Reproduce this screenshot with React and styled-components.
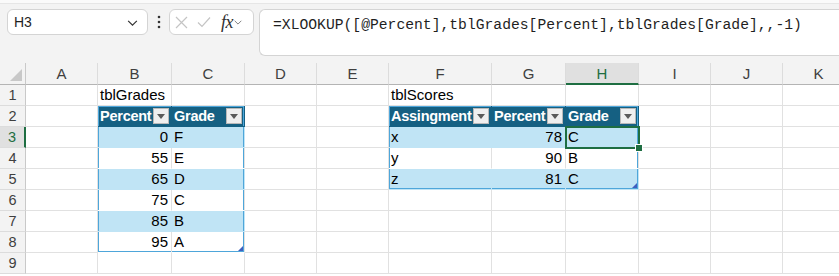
import React from 'react'
import styled, { createGlobalStyle, css } from 'styled-components'

const GlobalStyle = createGlobalStyle`
    html, body {
        margin: 0;
        padding: 0;
        background: #ffffff;
        overflow: hidden;
    }
`

const colours = {
    chrome: '#f3f3f3',
    grid: '#e1e1e1',
    headText: '#3f3f3f',
    tableHead: '#156082',
    band: '#c0e4f5',
    tableEdge: '#4ea6da',
    active: '#1e6e42',
}

const Window = styled.div`
    width: 839px;
    height: 276px;
    overflow: hidden;
    background: ${colours.chrome};
    font-family: "Liberation Sans", Arial, sans-serif;
`

const FormulaBar = styled.div`
    height: 63px;
    box-sizing: border-box;
    display: flex;
    align-items: flex-start;
    padding: 6px 0 0 7px;
    border-top: 3px solid #fafafa;
    box-shadow: inset 0 1px 0 #e6e6e6;
`

const Box = styled.div`
    box-sizing: border-box;
    background: #ffffff;
    border: 1px solid #d4d4d4;
    border-radius: 6px;
    display: flex;
    align-items: center;
`

const NameBox = styled(Box)`
    width: 141px;
    height: 26px;
    padding: 0 8px 0 6px;
    justify-content: space-between;
    font-size: 14px;
    color: #1f1f1f;
`

const Dots = styled.div`
    width: 21px;
    height: 26px;
    display: flex;
    align-items: center;
    justify-content: center;
`

const FnBox = styled(Box)`
    width: 85px;
    height: 26px;
    padding: 0 4px 0 5px;
    gap: 9px;
`

const FxGroup = styled.span`
    display: flex;
    align-items: center;
`

const Fx = styled.span`
    font-family: "Liberation Serif", "Times New Roman", serif;
    font-style: italic;
    font-size: 18px;
    color: #303030;
    margin-left: 1px;
    letter-spacing: -0.5px;
`

const FormulaInput = styled(Box)`
    flex: 1;
    height: 47px;
    margin-left: 5px;
    border-right: none;
    border-radius: 6px 0 0 6px;
    align-items: flex-start;
    padding: 7px 0 0 13px;
    font-family: "Liberation Mono", "Courier New", monospace;
    font-size: 14.7px;
    color: #1f1f1f;
    white-space: nowrap;
`

const Sheet = styled.div`
    display: grid;
    grid-template-columns: 26px 72px 74px 73px 72px 72px 103px 74px 73px 72px 72px 72px;
    grid-template-rows: 22px repeat(9, 21px);
    background: #ffffff;
    height: 213px;
`

const Corner = styled.div`
    background: ${colours.chrome};
    border-right: 1px solid #c9c9c9;
    border-bottom: 1px solid #b4b4b4;
    display: flex;
    align-items: flex-end;
    justify-content: flex-end;
    padding: 0 3px 3px 0;
`

const ColHead = styled.div`
    box-sizing: border-box;
    background: ${p => (p.$selected ? '#e0e0e0' : colours.chrome)};
    color: ${p => (p.$selected ? colours.active : colours.headText)};
    border-right: 1px solid #dcdcdc;
    border-bottom: ${p => (p.$selected ? `2px solid ${colours.active}` : '1px solid #b4b4b4')};
    font-size: 15px;
    display: flex;
    align-items: center;
    justify-content: center;
    padding-top: ${p => (p.$selected ? '1px' : '0')};
`

const RowHead = styled.div`
    box-sizing: border-box;
    background: ${p => (p.$selected ? '#e0e0e0' : colours.chrome)};
    color: ${p => (p.$selected ? colours.active : colours.headText)};
    border-right: ${p => (p.$selected ? `2px solid ${colours.active}` : '1px solid #c9c9c9')};
    border-bottom: 1px solid #dcdcdc;
    font-size: 14.5px;
    display: flex;
    align-items: center;
    justify-content: center;
`

const fills = {
    head: colours.tableHead,
    band: colours.band,
    white: '#ffffff',
}

const edgeShadow = edges => {
    const list = []
    if (edges.includes('t')) list.push(`inset 0 1px 0 ${colours.tableEdge}`)
    if (edges.includes('l')) list.push(`inset 1px 0 0 ${colours.tableEdge}`)
    if (edges.includes('r')) list.push(`inset -1px 0 0 ${colours.tableEdge}`)
    if (edges.includes('b')) list.push(`inset 0 -1px 0 ${colours.tableEdge}`)
    return list.length ? list.join(', ') : 'none'
}

const Cell = styled.div`
    position: relative;
    box-sizing: border-box;
    background: ${p => (p.$fill ? fills[p.$fill] : '#ffffff')};
    border-right: 1px solid ${p => (p.$fill === 'head' || p.$fill === 'band' ? fills[p.$fill] : colours.grid)};
    border-bottom: 1px solid ${p => (p.$fill === 'band' ? colours.band : p.$fill === 'white' ? '#ffffff' : p.$fill === 'head' ? colours.tableHead : colours.grid)};
    box-shadow: ${p => edgeShadow(p.$edges || '')};
    font-size: 15px;
    line-height: 20px;
    color: ${p => (p.$fill === 'head' ? '#ffffff' : '#000000')};
    font-weight: ${p => (p.$fill === 'head' ? 700 : 400)};
    display: flex;
    align-items: center;
    justify-content: ${p => (p.$align === 'right' ? 'flex-end' : 'flex-start')};
    padding: 0 ${p => (p.$align === 'right' ? '3px' : '0')} 0 2px;
    white-space: nowrap;

    ${p => p.$active && css`
        &::before {
            content: '';
            position: absolute;
            left: -1px;
            top: -1px;
            right: -2px;
            bottom: -2px;
            border: 2px solid ${colours.active};
            z-index: 2;
        }
        &::after {
            content: '';
            position: absolute;
            right: -5px;
            bottom: -5px;
            width: 6px;
            height: 6px;
            background: ${colours.active};
            border: 1px solid #ffffff;
            z-index: 3;
        }
    `}

    ${p => p.$resize && !p.$active && css`
        &::after {
            content: '';
            position: absolute;
            right: 1px;
            bottom: 1px;
            border-left: 5px solid transparent;
            border-bottom: 5px solid #3f5fbf;
        }
    `}
`

const HeadLabel = styled.span`
    flex: 1;
    font-size: 14.5px;
    letter-spacing: -0.25px;
`

const FilterButton = styled.span`
    flex: none;
    box-sizing: border-box;
    width: 16px;
    height: 16px;
    margin-right: 2px;
    background: #efefef;
    border: 1px solid #b9b9b9;
    display: flex;
    align-items: center;
    justify-content: center;
    &::before {
        content: '';
        border-left: 4px solid transparent;
        border-right: 4px solid transparent;
        border-top: 5px solid #5a5a5a;
        margin-top: 1px;
    }
`

const Chevron = ({ size = 12, colour = '#444' }) => (
    <svg width={size} height={size} viewBox="0 0 12 12">
        <path d="M2 4.5 L6 8.5 L10 4.5" fill="none" stroke={colour} strokeWidth="1.1" />
    </svg>
)

const columns = ['A', 'B', 'C', 'D', 'E', 'F', 'G', 'H', 'I', 'J', 'K']

const tables = [
    {
        col: 1,
        row: 2,
        header: ['Percent', 'Grade'],
        body: [[0, 'F'], [55, 'E'], [65, 'D'], [75, 'C'], [85, 'B'], [95, 'A']],
    },
    {
        col: 5,
        row: 2,
        header: ['Assingment', 'Percent', 'Grade'],
        body: [['x', 78, 'C'], ['y', 90, 'B'], ['z', 81, 'C']],
    },
]

const labels = { '1-1': 'tblGrades', '1-5': 'tblScores' }

function cellFor (r, c) {
    for (const t of tables) {
        const width = t.header.length
        const height = t.body.length + 1
        if (c < t.col || c >= t.col + width || r < t.row || r >= t.row + height) continue
        const i = c - t.col
        const j = r - t.row
        let edges = ''
        if (i === 0) edges += 'l'
        if (i === width - 1) edges += 'r'
        if (j === 0) edges += 't'
        if (j === height - 1) edges += 'b'
        if (j === 0) {
            return { fill: 'head', edges, head: t.header[i] }
        }
        const value = t.body[j - 1][i]
        return {
            fill: j % 2 === 1 ? 'band' : 'white',
            edges,
            value,
            align: typeof value === 'number' ? 'right' : 'left',
            resize: i === width - 1 && j === height - 1,
        }
    }
    return { value: labels[`${r}-${c}`] }
}

export default function App () {
    const rows = Array.from({ length: 9 }, (_, k) => k + 1)
    return (
        <Window>
            <GlobalStyle />
            <FormulaBar>
                <NameBox>
                    <span>H3</span>
                    <Chevron size={13} colour="#333" />
                </NameBox>
                <Dots>
                    <svg width="4" height="14" viewBox="0 0 4 14">
                        <circle cx="2" cy="2" r="1.3" fill="#333" />
                        <circle cx="2" cy="7" r="1.3" fill="#333" />
                        <circle cx="2" cy="12" r="1.3" fill="#333" />
                    </svg>
                </Dots>
                <FnBox>
                    <svg width="13" height="13" viewBox="0 0 13 13">
                        <path d="M1 1 L12 12 M12 1 L1 12" stroke="#c4c4c4" strokeWidth="1.2" />
                    </svg>
                    <svg width="14" height="12" viewBox="0 0 14 12">
                        <path d="M1 6.5 L5 10.5 L13 1.5" fill="none" stroke="#c4c4c4" strokeWidth="1.2" />
                    </svg>
                    <FxGroup>
                        <Fx>fx</Fx>
                        <Chevron size={10} colour="#777" />
                    </FxGroup>
                </FnBox>
                <FormulaInput>=XLOOKUP([@Percent],tblGrades[Percent],tblGrades[Grade],,-1)</FormulaInput>
            </FormulaBar>
            <Sheet>
                <Corner>
                    <svg width="12" height="12" viewBox="0 0 12 12">
                        <path d="M12 0 L12 12 L0 12 Z" fill="#c8c8c8" />
                    </svg>
                </Corner>
                {columns.map(col => (
                    <ColHead key={col} $selected={col === 'H'}>{col}</ColHead>
                ))}
                {rows.map(r => (
                    <React.Fragment key={r}>
                        <RowHead $selected={r === 3}>{r}</RowHead>
                        {columns.map((col, c) => {
                            const cell = cellFor(r, c)
                            return (
                                <Cell
                                    key={col}
                                    $fill={cell.fill}
                                    $edges={cell.edges}
                                    $align={cell.align}
                                    $resize={cell.resize}
                                    $active={col === 'H' && r === 3}
                                >
                                    {cell.head ? (
                                        <>
                                            <HeadLabel>{cell.head}</HeadLabel>
                                            <FilterButton />
                                        </>
                                    ) : cell.value}
                                </Cell>
                            )
                        })}
                    </React.Fragment>
                ))}
            </Sheet>
        </Window>
    )
}
